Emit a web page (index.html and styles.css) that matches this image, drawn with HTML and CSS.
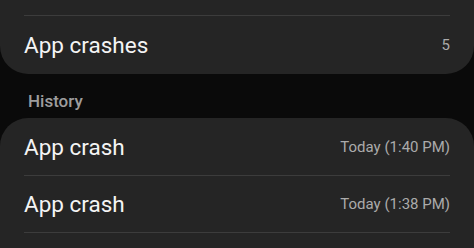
FILE: index.html
```html
<!DOCTYPE html>
<html>
<head>
<meta charset="utf-8">
<link rel="stylesheet" href="styles.css">
</head>
<body>
<div class="page">
  <div class="card card-top">
    <div class="row row-hidden"><div class="row-inner"></div></div>
    <div class="row row-last">
      <div class="row-inner">
        <span class="title">App crashes</span>
        <span class="value">5</span>
      </div>
    </div>
  </div>
  <div class="section-header">History</div>
  <div class="card card-list">
    <div class="row">
      <div class="row-inner">
        <span class="title">App crash</span>
        <span class="value">Today (1:40 PM)</span>
      </div>
    </div>
    <div class="row">
      <div class="row-inner">
        <span class="title">App crash</span>
        <span class="value">Today (1:38 PM)</span>
      </div>
    </div>
    <div class="row row-spacer"><div class="row-inner"></div></div>
  </div>
</div>
</body>
</html>
```

FILE: styles.css
```css
html, body {
  margin: 0;
  padding: 0;
  background: #0a0a0a;
  overflow: hidden;
}
body {
  font-family: Roboto, "Noto Sans", sans-serif;
  color: #f2f2f2;
}
.page {
  display: flex;
  flex-direction: column;
}
.card {
  background: #252525;
  border-radius: 28px;
}
.card-top {
  margin-top: -41px;
}
.row {
  padding: 0 24px;
}
.row-inner {
  height: 56px;
  display: flex;
  align-items: center;
  justify-content: space-between;
  border-bottom: 1px solid #3c3c3c;
}
.row-last .row-inner {
  height: 58px;
  border-bottom: none;
}
.title {
  font-size: 22.5px;
  color: #f4f4f4;
}
.value {
  font-size: 15px;
  color: #ababab;
}
.section-header {
  height: 44px;
  box-sizing: border-box;
  padding: 17px 28px 0;
  font-size: 17px;
  font-weight: 500;
  line-height: 20px;
  color: #9d9d9d;
}
.card-list {
  padding-top: 1px;
}
```
